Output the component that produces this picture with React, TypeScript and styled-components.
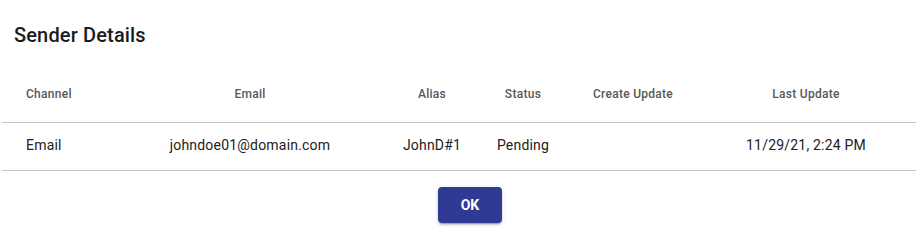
import React from 'react';
import styled, { createGlobalStyle } from 'styled-components';

const GlobalStyle = createGlobalStyle`
  html, body {
    margin: 0;
    padding: 0;
    background: #ffffff;
    font-family: Roboto, "Noto Sans", Arial, sans-serif;
  }
`;

const Dialog = styled.div`
  width: 916px;
  height: 229px;
  background: #ffffff;
  overflow: hidden;
`;

const Title = styled.h2`
  margin: 0;
  padding: 19px 14px 0;
  font-size: 20px;
  line-height: 32px;
  font-weight: 500;
  letter-spacing: 0.15px;
  color: #1b1b1b;
`;

const Table = styled.div`
  margin-left: 2px;
  display: grid;
  grid-template-columns: 110px 276px 88px 94px 126px 220px;
`;

const Cell = styled.div<{ $head?: boolean; $left?: boolean }>`
  text-align: ${(p) => (p.$left ? 'left' : 'center')};
  padding-left: ${(p) => (p.$left ? '24px' : '0')};
  white-space: nowrap;
  border-bottom: 1px solid #c4c4c4;
  padding-top: ${(p) => (p.$head ? '35px' : '12px')};
  padding-bottom: ${(p) => (p.$head ? '20px' : '15px')};
  font-size: ${(p) => (p.$head ? '12px' : '14px')};
  line-height: ${(p) => (p.$head ? '16px' : '20px')};
  font-weight: ${(p) => (p.$head ? 500 : 400)};
  letter-spacing: ${(p) => (p.$head ? '0.28px' : '0.2px')};
  color: ${(p) => (p.$head ? '#575757' : '#212121')};
`;

const Footer = styled.div`
  display: flex;
  justify-content: center;
  padding: 16px 0 0 24px;
`;

const OkButton = styled.button`
  width: 64px;
  height: 36px;
  border: none;
  border-radius: 4px;
  background: #2e3a93;
  color: #ffffff;
  font-family: Roboto, Arial, sans-serif;
  font-size: 14px;
  font-weight: 700;
  cursor: pointer;
  box-shadow: 0 3px 1px -2px rgba(0, 0, 0, 0.2), 0 2px 2px 0 rgba(0, 0, 0, 0.14),
    0 1px 5px 0 rgba(0, 0, 0, 0.12);
`;

const headers = ['Channel', 'Email', 'Alias', 'Status', 'Create Update', 'Last Update'];

const rows = [['Email', 'johndoe01@domain.com', 'JohnD#1', 'Pending', '', '11/29/21, 2:24 PM']];

export default function App() {
  return (
    <Dialog>
      <GlobalStyle />
      <Title>Sender Details</Title>
      <Table>
        {headers.map((h, i) => (
          <Cell key={h} $head $left={i === 0}>
            {h}
          </Cell>
        ))}
        {rows.map((r, ri) =>
          r.map((v, i) => (
            <Cell key={`${ri}-${i}`} $left={i === 0}>
              {v || '\u00a0'}
            </Cell>
          ))
        )}
      </Table>
      <Footer>
        <OkButton>OK</OkButton>
      </Footer>
    </Dialog>
  );
}
